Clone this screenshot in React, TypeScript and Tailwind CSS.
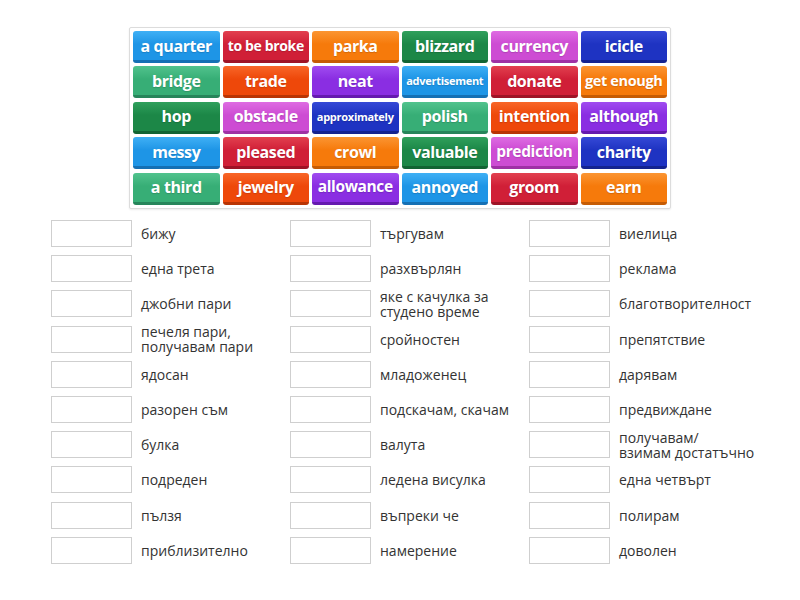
import React from "react";

type Tone = { base: string; hi: string; edge: string };

// nine tile colours, repeated across the word bank
const tones: Tone[] = [
  { base: "#1e95e6", hi: "#3fb0f5", edge: "#1570b4" },
  { base: "#d01f37", hi: "#e2404f", edge: "#9e1326" },
  { base: "#f67a0b", hi: "#fb9532", edge: "#c65c04" },
  { base: "#1c8747", hi: "#2fa05c", edge: "#126433" },
  { base: "#cd4cd3", hi: "#de6ce2", edge: "#9f31a5" },
  { base: "#1e33c2", hi: "#3549d6", edge: "#142390" },
  { base: "#37ae76", hi: "#51c38d", edge: "#26855a" },
  { base: "#ee480a", hi: "#f86628", edge: "#b93404" },
  { base: "#8a2ee2", hi: "#a04cf0", edge: "#6519af" },
];

const words: { text: string; size?: string }[] = [
  { text: "a quarter" },
  { text: "to be broke", size: "text-[14px]" },
  { text: "parka" },
  { text: "blizzard" },
  { text: "currency" },
  { text: "icicle" },
  { text: "bridge" },
  { text: "trade" },
  { text: "neat" },
  { text: "advertisement", size: "text-[11px]" },
  { text: "donate" },
  { text: "get enough", size: "text-[14.5px]" },
  { text: "hop" },
  { text: "obstacle" },
  { text: "approximately", size: "text-[11px]" },
  { text: "polish" },
  { text: "intention" },
  { text: "although" },
  { text: "messy" },
  { text: "pleased" },
  { text: "crowl" },
  { text: "valuable" },
  { text: "prediction", size: "text-[15.5px]" },
  { text: "charity" },
  { text: "a third" },
  { text: "jewelry" },
  { text: "allowance", size: "text-[15.5px]" },
  { text: "annoyed" },
  { text: "groom" },
  { text: "earn" },
];

const columns: string[][][] = [
  [
    ["бижу"],
    ["една трета"],
    ["джобни пари"],
    ["печеля пари,", "получавам пари"],
    ["ядосан"],
    ["разорен съм"],
    ["булка"],
    ["подреден"],
    ["пълзя"],
    ["приблизително"],
  ],
  [
    ["търгувам"],
    ["разхвърлян"],
    ["яке с качулка за", "студено време"],
    ["сройностен"],
    ["младоженец"],
    ["подскачам, скачам"],
    ["валута"],
    ["ледена висулка"],
    ["въпреки че"],
    ["намерение"],
  ],
  [
    ["виелица"],
    ["реклама"],
    ["благотворителност"],
    ["препятствие"],
    ["дарявам"],
    ["предвиждане"],
    ["получавам/", "взимам достатъчно"],
    ["една четвърт"],
    ["полирам"],
    ["доволен"],
  ],
];

function Tile({ text, size, tone }: { text: string; size?: string; tone: Tone }) {
  return (
    <div
      className={`flex h-[32px] items-center justify-center rounded-[3px] border-b-[3px] font-bold leading-none tracking-tight text-white whitespace-nowrap ${size ?? "text-[16px]"}`}
      style={{
        background: `linear-gradient(to bottom, ${tone.hi} 0%, ${tone.base} 45%, ${tone.base} 100%)`,
        borderBottomColor: tone.edge,
        textShadow: "0 1px 1px rgba(0,0,0,0.15)",
      }}
    >
      {text}
    </div>
  );
}

export default function App() {
  return (
    <div className="min-h-[600px] w-[800px] bg-white font-['Open_Sans','Noto_Sans',sans-serif]">
      <div className="flex justify-center pt-[27px]">
        <div className="grid w-[542px] grid-cols-6 gap-x-[3px] gap-y-[3.4px] rounded-[2px] border border-[#dcdcdc] bg-white p-[3px] pb-[3.5px] shadow-[0_1px_2px_rgba(0,0,0,0.08)]">
          {words.map((w, i) => (
            <Tile key={w.text} text={w.text} size={w.size} tone={tones[i % tones.length]} />
          ))}
        </div>
      </div>

      <div className="mt-[11px] grid grid-cols-[239px_239px_239px] pl-[51px]">
        {columns.map((col, c) => (
          <div key={c} className="flex flex-col gap-y-[8.2px]">
            {col.map((lines, r) => (
              <div key={r} className="flex h-[27px] items-center">
                <div className="h-[27px] w-[81px] shrink-0 border border-[#cfcfcf] bg-white" />
                <div className="ml-[9px] text-[14px] leading-[15px] text-[#333333]">
                  {lines.map((l, k) => (
                    <div key={k} className="whitespace-nowrap">
                      {l}
                    </div>
                  ))}
                </div>
              </div>
            ))}
          </div>
        ))}
      </div>
    </div>
  );
}
